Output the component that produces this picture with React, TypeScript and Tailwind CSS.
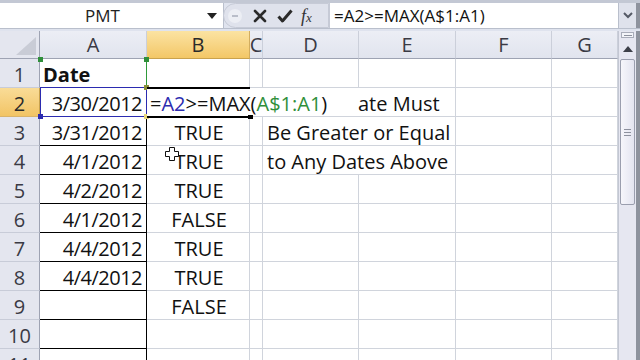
import React from 'react';

const cols = 'grid grid-cols-[40px_107px_103px_13px_96px_97px_96px_66px] h-[29px] shrink-0 text-[20px] leading-[24px]';
const font = "font-['Open_Sans','Noto_Sans',sans-serif]";

const dates = ['3/30/2012', '3/31/2012', '4/1/2012', '4/2/2012', '4/1/2012', '4/4/2012', '4/4/2012', '', '', ''];
const results = ['', 'TRUE', 'TRUE', 'TRUE', 'FALSE', 'TRUE', 'TRUE', 'FALSE', '', ''];

function RowHead({ n, active }: { n: number; active?: boolean }) {
    return (
        <div
            className={`flex items-center justify-center pt-[3px] border-r border-b ${
                active
                    ? 'bg-gradient-to-b from-[#f9dc97] to-[#f2c464] border-r-[#c9a24d] border-b-[#d9b36a] text-[#2a2a2a]'
                    : 'bg-[#e4e6ef] border-r-[#9ea3b3] border-b-[#c8ccd8] text-[#3a3a44]'
            }`}
        >
            {n}
        </div>
    );
}

function Cell({ children, className = '' }: { children?: React.ReactNode; className?: string }) {
    return (
        <div className={`relative flex items-center pt-[3px] whitespace-nowrap border-r border-b border-[#d0d4dc] bg-white ${className}`}>
            {children}
        </div>
    );
}

function Handle({ className }: { className: string }) {
    return <div className={`absolute z-10 w-[5px] h-[5px] ${className}`} />;
}

export default function App() {
    return (
        <div className={`w-[640px] h-[360px] overflow-hidden flex flex-col bg-[#dfe3ee] ${font} text-[#111]`}>
            {/* top strip */}
            <div className="h-[3px] bg-[#c3c8d4]" />

            {/* formula bar */}
            <div className="h-[26px] flex border-b border-[#b9bfcc]">
                <div className="w-[224px] bg-white flex items-center border-r border-[#b9bfcc]">
                    <span className="w-[205px] text-center text-[17px] text-[#222]">PMT</span>
                    <svg width="10" height="6" viewBox="0 0 10 6" className="ml-[2px]">
                        <path d="M0 0h10L5 6z" fill="#222" />
                    </svg>
                </div>
                <div className="w-[106px] flex items-center bg-[#dfe2ec] rounded-l-[14px] border border-[#c6cad6] -ml-[1px]">
                    <div className="w-[14px] h-[14px] ml-[4px] rounded-full bg-[#eceef4] flex items-center justify-center">
                        <div className="w-[6px] h-[2px] bg-[#b9bdc9]" />
                    </div>
                    <svg width="14" height="14" viewBox="0 0 14 14" className="ml-[11px]">
                        <path d="M2 2l10 10M12 2L2 12" stroke="#2a2a2a" strokeWidth="2.6" strokeLinecap="round" />
                    </svg>
                    <svg width="16" height="14" viewBox="0 0 16 14" className="ml-[10px]">
                        <path d="M1.5 7.5l4 4.5L14.5 1.5" stroke="#2a2a2a" strokeWidth="3" fill="none" strokeLinejoin="round" />
                    </svg>
                    <span className="ml-[8px] font-['Liberation_Serif',serif] italic text-[18px] text-[#333] leading-none">
                        f<span className="text-[13px]">x</span>
                    </span>
                </div>
                <div className="flex-1 bg-white flex items-center pl-[4px] text-[17px] text-[#111] border-l border-[#c6cad6]">
                    =A2&gt;=MAX(A$1:A1)
                </div>
                <div className="w-[18px] bg-[#dfe2ec] border-l border-[#b9bfcc] flex items-center justify-center">
                    <svg width="10" height="7" viewBox="0 0 10 7">
                        <path d="M1 1l4 4 4-4" stroke="#555a66" strokeWidth="2" fill="none" />
                    </svg>
                </div>
                <div className="w-[4px] bg-[#8e939e]" />
            </div>

            <div className="h-[2px]" />

            {/* sheet */}
            <div className="flex flex-1 min-h-0">
                <div className="w-[618px] flex flex-col overflow-hidden">
                    {/* column headers */}
                    <div className={`${cols} !h-[28px] text-[#3a3a44]`}>
                        <div className="bg-[#e4e6ef] border-r border-b border-[#9ea3b3] flex items-end justify-end p-[3px]">
                            <svg width="20" height="18" viewBox="0 0 20 18">
                                <path d="M20 0V18H0z" fill="#c9ccd6" />
                            </svg>
                        </div>
                        {['A', 'B', 'C', 'D', 'E', 'F', 'G'].map((c) => (
                            <div
                                key={c}
                                className={`flex items-center justify-center border-r border-b ${
                                    c === 'B'
                                        ? 'bg-gradient-to-b from-[#fbe3a2] to-[#f3c766] border-r-[#d2ad5f] border-b-[#c9a24d] text-[#2a2a2a]'
                                        : 'bg-gradient-to-b from-[#eceef5] to-[#e1e4ee] border-r-[#cbcfda] border-b-[#9ea3b3]'
                                }`}
                            >
                                {c}
                            </div>
                        ))}
                    </div>

                    {/* row 1 */}
                    <div className={cols}>
                        <RowHead n={1} />
                        <Cell className="pl-[3px] font-bold border-r-[#2f9a3a] border-b-[#2b2bb0]">
                            Date
                            <Handle className="-left-[2px] -top-[2px] bg-[#2f8f3a]" />
                            <Handle className="-right-[3px] -top-[2px] bg-[#2f8f3a]" />
                        </Cell>
                        <Cell />
                        <Cell />
                        <Cell />
                        <Cell />
                        <Cell />
                        <Cell />
                    </div>

                    {/* row 2 (editing) */}
                    <div className={cols}>
                        <RowHead n={2} active />
                        <Cell className="justify-end pr-[4px] tracking-[-0.5px] border-l border-l-[#2b2bb0] border-r-[#2b2bb0] border-b-[#2b2bb0]">
                            {dates[0]}
                            <Handle className="-left-[3px] -bottom-[3px] bg-[#2b2bb0]" />
                            <Handle className="-right-[3px] -bottom-[3px] bg-[#e8d77a]" />
                            <Handle className="-right-[3px] -top-[3px] bg-[#8a8f3a]" />
                        </Cell>
                        <Cell className="col-span-3 !pt-0 border-r-0 bg-transparent z-20">
                            <div className="absolute -top-[1px] left-0 w-[103px] h-[2px] bg-black" />
                            <div className="absolute -bottom-[2px] left-0 w-[103px] h-[2px] bg-black" />
                            <div className="absolute -bottom-[3px] left-[101px] w-[5px] h-[4px] bg-black" />
                            <span className="w-[206px] shrink-0 h-[28px] flex items-center pt-[3px] bg-white pl-[3px]">
                                =<span className="text-[#2b2bb0]">A2</span>&gt;=MAX(
                                <span className="text-[#2f8f3a]">A$1:A1</span>)
                            </span>
                            <span className="ml-[5px] shrink-0 pt-[3px]">ate Must</span>
                        </Cell>
                        <Cell />
                        <Cell />
                        <Cell />
                    </div>

                    {/* rows 3-10 */}
                    {dates.slice(1).map((d, i) => {
                        const r = i + 3;
                        const note = r === 3 ? 'Be Greater or Equal' : r === 4 ? 'to Any Dates Above' : '';
                        return (
                            <div key={r} className={cols}>
                                <RowHead n={r} />
                                <Cell className="justify-end pr-[4px] tracking-[-0.5px] border-r-black border-b-black">{d}</Cell>
                                <Cell className="justify-center">
                                    <span className="pl-[2px]">{results[i + 1]}</span>
                                    {r === 4 && (
                                        <svg width="14" height="14" viewBox="0 0 14 14" className="absolute left-[18px] top-[1px]">
                                            <path
                                                d="M4.5 0.5h5v4h4v5h-4v4h-5v-4h-4v-5h4z"
                                                fill="#fff"
                                                stroke="#111"
                                                strokeWidth="1"
                                            />
                                        </svg>
                                    )}
                                </Cell>
                                <Cell />
                                <Cell className={note ? 'border-r-0 pl-[4px] z-10' : ''}>{note}</Cell>
                                <Cell />
                                <Cell />
                                <Cell />
                            </div>
                        );
                    })}
                    <div className={cols}>
                        <RowHead n={11} />
                        <Cell className="border-r-black" />
                        <Cell />
                        <Cell />
                        <Cell />
                        <Cell />
                        <Cell />
                        <Cell />
                    </div>
                </div>

                {/* vertical scrollbar */}
                <div className="w-[18px] flex flex-col bg-[#e6e7f1] border-l border-[#c3c7d3]">
                    <div className="h-[6px] mx-[2px] mt-[1px] border border-[#a9adba] bg-[#f3f4f9] flex items-center justify-center">
                        <div className="w-[8px] h-px bg-[#8d919e]" />
                    </div>
                    <div className="h-[21px] flex items-center justify-center">
                        <svg width="10" height="6" viewBox="0 0 10 6">
                            <path d="M0 6L5 0l5 6z" fill="#3c3f48" />
                        </svg>
                    </div>
                    <div className="h-[146px] mx-[1px] rounded-[2px] border border-[#9a9eae] bg-gradient-to-r from-[#f6f6fb] to-[#e3e4f0] flex flex-col items-center justify-center gap-[2px]">
                        <div className="w-[7px] h-px bg-[#8d919e]" />
                        <div className="w-[7px] h-px bg-[#8d919e]" />
                        <div className="w-[7px] h-px bg-[#8d919e]" />
                    </div>
                    <div className="flex-1" />
                </div>
                <div className="w-[4px] bg-[#8e939e]" />
            </div>
        </div>
    );
}
